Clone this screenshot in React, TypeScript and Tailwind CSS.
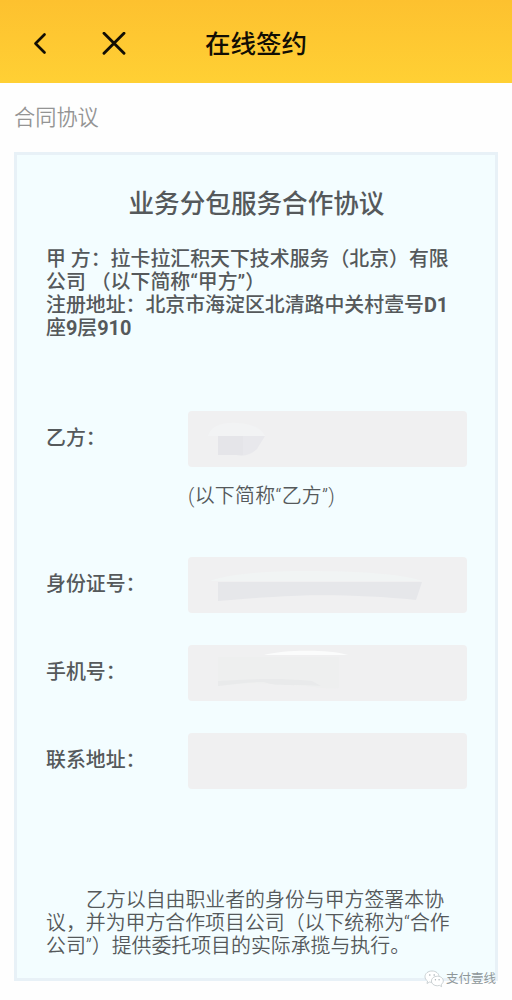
import React from 'react';

interface FieldProps {
  label: string;
  children?: React.ReactNode;
}

const Field: React.FC<FieldProps> = ({ label, children }) => {
  return (
    <div className="flex h-14 items-center">
      <span className="w-[142px] shrink-0 pb-px font-medium">{label}</span>
      <div className="h-14 w-[279px] overflow-hidden rounded bg-[#f0f0f1]">{children}</div>
    </div>
  );
};

// Smudges that cover the private values
const NameMask = () => (
  <svg className="h-14 w-[279px]" viewBox="0 0 279 56">
    <path d="M20 25C23 15 34 11 50 12C64 13 73 17 77 25Z" fill="#f2f3f4" />
    <path d="M30 25H77L69 38C64 43 57 46 48 44H30Z" fill="#e8e8ec" />
    <path d="M30 25H55V44H30Z" fill="#e5e5e9" />
  </svg>
);

const IdMask = () => (
  <svg className="h-14 w-[279px]" viewBox="0 0 279 56">
    <path d="M22 24C40 17 75 14 120 14C170 14 215 17 234 24Z" fill="#f1f4f4" />
    <path d="M30 25H234L228 43C180 38 125 37 85 40C62 41 48 43 30 44Z" fill="#e6e7ea" />
  </svg>
);

const PhoneMask = () => (
  <svg className="h-14 w-[279px]" viewBox="0 0 279 56">
    <path d="M30 12H151V43C136 45 126 41 105 40C80 39 62 36 30 41Z" fill="#eeefef" />
    <path d="M30 36C65 34 90 33 124 36L133 41C112 39 87 42 76 37C60 37 49 39 30 41Z" fill="#e9eaeb" />
    <path d="M76 10C95 5 139 4 160 10Z" fill="#fbfcfc" />
  </svg>
);

const WechatIcon = () => (
  <svg className="h-[18px] w-5" viewBox="0 0 20 18" fill="#fff" stroke="#b7c0c3" strokeWidth="0.7">
    <path d="M8 1C4 1 1 3.5 1 6.7C1 8.5 2 10 3.5 11L3 13.5L5.6 12C6.4 12.3 7.2 12.4 8 12.4C12 12.4 15 10 15 6.7C15 3.5 12 1 8 1Z" />
    <path d="M13.3 6.2C10 6.2 7.4 8.3 7.4 11C7.4 13.7 10 15.8 13.3 15.8L15.5 15.4L17.6 16.7L17.2 14.5C18.5 13.6 19.3 12.4 19.3 11C19.3 8.3 16.6 6.2 13.3 6.2Z" />
    <g fill="#a9b2b5" stroke="none">
      <circle cx="5.8" cy="5" r="0.8" />
      <circle cx="10.2" cy="5" r="0.8" />
      <circle cx="11.4" cy="9.7" r="0.7" />
      <circle cx="15.1" cy="9.7" r="0.7" />
    </g>
  </svg>
);

const Header = () => {
  return (
    <header className="flex h-[83px] items-center bg-gradient-to-b from-[#fdc12f] to-[#ffd034] pt-1 text-[#120e04]">
      <button aria-label="返回" className="ml-8">
        <svg className="h-6 w-4" viewBox="0 0 16 24" fill="none" stroke="currentColor" strokeWidth="2.7">
          <path d="M12.5 2.5L3.5 11.5L12.5 20.5" strokeLinecap="round" strokeLinejoin="round" />
        </svg>
      </button>
      <button aria-label="关闭" className="ml-[54px]">
        <svg className="h-6 w-6" viewBox="0 0 24 24" fill="none" stroke="currentColor" strokeWidth="2.9">
          <path d="M2 1.3L22 21.3M22 1.3L2 21.3" strokeLinecap="round" />
        </svg>
      </button>
      <h1 className="ml-[79px] text-[25.5px] leading-8 font-medium">在线签约</h1>
    </header>
  );
};

const App: React.FC = () => {
  return (
    <div className="relative h-[1000px] w-[512px] overflow-hidden bg-[#fefefe] font-['Roboto','Noto_Sans_CJK_SC',sans-serif]">
      <Header />
      <div className="px-[14px] pt-5">
        <h2 className="h-[49px] text-[21.2px] leading-[30px] font-[350] text-[#949494]">合同协议</h2>
        <main className="h-[829px] w-[484px] border-[3px] border-[#e8f1f7] bg-[#f3fdff] pt-[34px] pl-[29px] text-[19.9px] leading-[23px] whitespace-nowrap text-[#55595b]">
          <h3 className="-ml-7 text-center text-[25.6px] leading-[30px] font-medium">业务分包服务合作协议</h3>
          <div className="mt-[29px] font-medium">
            <p>甲 方：拉卡拉汇积天下技术服务（北京）有限</p>
            <p>公司 （以下简称“甲方”）</p>
            <p>注册地址：北京市海淀区北清路中关村壹号<b>D1</b></p>
            <p>座<b>9</b>层<b>910</b></p>
          </div>
          <div className="mt-[71px]">
            <Field label="乙方："><NameMask /></Field>
            <p className="mt-[18px] mb-[49px] ml-[142px] font-[350] tracking-[0.3px]">(以下简称“乙方”)</p>
            <div className="flex flex-col gap-8">
              <Field label="身份证号："><IdMask /></Field>
              <Field label="手机号："><PhoneMask /></Field>
              <Field label="联系地址：" />
            </div>
          </div>
          <div className="mt-[100px] font-[350]">
            <p className="pl-10">乙方以自由职业者的身份与甲方签署本协</p>
            <p>议，并为甲方合作项目公司（以下统称为“合作</p>
            <p>公司”）提供委托项目的实际承揽与执行。</p>
          </div>
        </main>
      </div>
      <div className="absolute right-4 bottom-2.5 flex items-center gap-0.5 text-[12.5px] leading-[22px] text-[#8e9799]">
        <WechatIcon />
        <span>支付壹线</span>
      </div>
    </div>
  );
};

export default App;
